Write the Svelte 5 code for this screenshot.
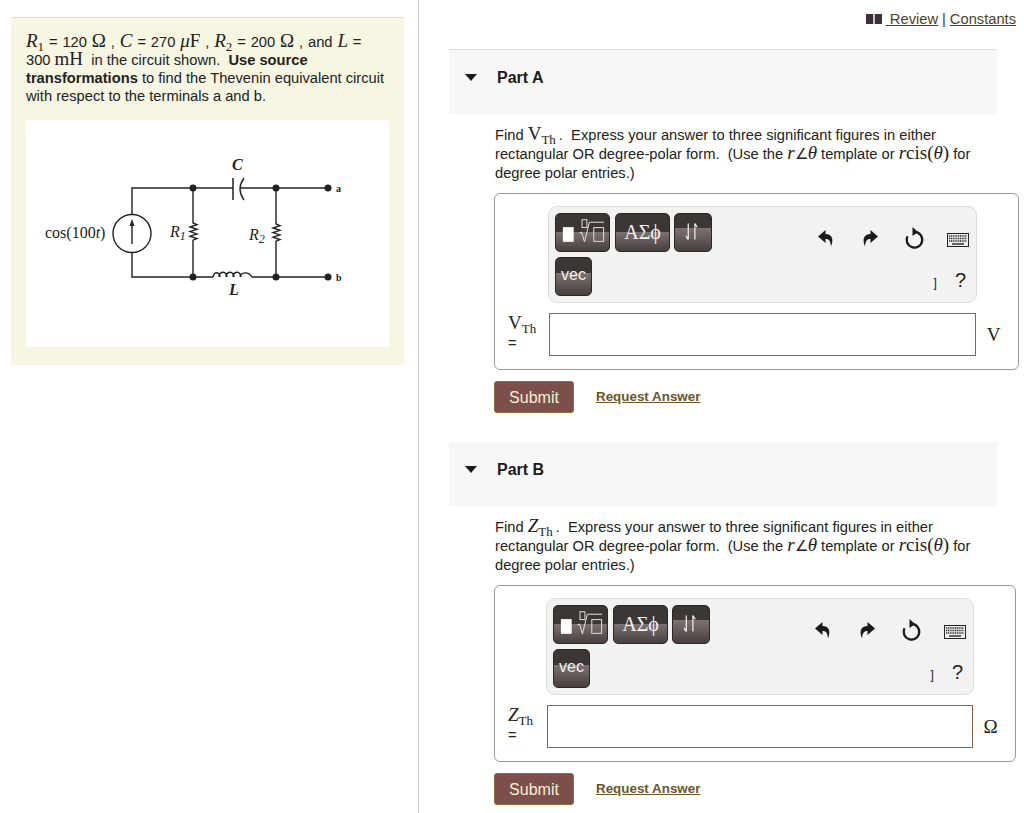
<script>
  const parts = [
    { id: 'A', v: 'V', italic: false, unit: 'V', labelWidth: 41, boxRight: 5 },
    { id: 'B', v: 'Z', italic: true, unit: 'Ω', labelWidth: 39, boxRight: 8 },
  ];
</script>

{#snippet tool(kind)}
  <span class="tool">
    {#if kind === 'undo'}
      <svg viewBox="0 0 18 20" width="18" height="20">
        <path d="M8.500 2 1 8.500 8.500 15v-4c3.200 0 5 1.500 5.500 7.500C17.500 10 14 6 8.500 6z" />
      </svg>
    {:else if kind === 'redo'}
      <svg viewBox="0 0 18 20" width="18" height="20">
        <path d="M9.500 2 17 8.500 9.500 15v-4c-3.200 0-5 1.500-5.500 7.500C.5 10 4 6 9.500 6z" />
      </svg>
    {:else if kind === 'reset'}
      <svg viewBox="0 0 20 24" width="20" height="24">
        <path d="M10.500 6a7.800 7.800 0 1 1-7 4.200" fill="none" stroke="#1b1b1b" stroke-width="2.300" />
        <path d="M8.500 1 14 6l-5.500 4z" />
      </svg>
    {:else}
      <svg class="keyboard" viewBox="0 0 22 14" width="22" height="14">
        <rect x="0.500" y="0.500" width="21" height="13" fill="#eee" stroke="#222" />
        <path d="M2 3h18M2 5.500h18M2 8h18" stroke="#333" stroke-width="1.300" stroke-dasharray="1.200 .6" />
        <path d="M5 11h12" stroke="#333" stroke-width="1.500" />
      </svg>
    {/if}
  </span>
{/snippet}

{#snippet mathName(part)}
  <span class="math big" class:it={part.italic}>{part.v}</span><sub class="math">Th</sub>
{/snippet}

<div class="page">
  <aside class="left">
    <div class="problem">
      <p class="statement">
        <span class="spaced"><span class="math big it">R</span><sub class="math">1</sub> = 120 <span class="math big">Ω</span> , <span class="math big it">C</span> = 270 <span class="math big"><i>μ</i>F</span> , <span class="math big it">R</span><sub class="math">2</sub> = 200 <span class="math big">Ω</span> , and <span class="math big it">L</span> =</span>
        <br />300 <span class="math big">mH</span> &nbsp;in the circuit shown. &nbsp;<b>Use source<br />transformations</b> to find the Thevenin equivalent circuit<br />with respect to the terminals a and b.
      </p>
      <div class="figure">
        <svg viewBox="0 0 363 227" width="363" height="227">
          <g fill="none" stroke="#222" stroke-width="1.400">
            <path d="M106 95V68H207M214 68H302M106 132V157H187M226 157H302" />
            <path d="M167 68V103l4 1.700-7 2.300 7 2.300-7 2.300 7 2.300-7 2.300 7 2.300-4 1.700V157" />
            <path d="M250 68V104l4 1.700-7 2.300 7 2.300-7 2.300 7 2.300-7 2.300 7 2.300-4 1.700V157" />
            <path d="M207 58V80" stroke-width="1.500" />
            <path d="M218 58Q210 69 218 80" />
            <path d="M187 157c1-5 4-5 6-3 1 1.500 1 3 1 3M193 157c0-5 5-6 7-3 1 1.500 1 3 1 3M200 157c0-5 5-6 7-3 1 1.500 1 3 1 3M207 157c0-5 5-6 7-3 1 1.500 1 3 1 3M214 157c1-5 8-6 12 0" />
            <circle cx="106" cy="113.500" r="19" />
            <path d="M106 124V104" />
          </g>
          <path d="M103.500 106 106 99l2.500 7z" fill="#222" />
          <g fill="#222">
            <circle cx="167" cy="68" r="3.500" />
            <circle cx="250" cy="68" r="3.500" />
            <circle cx="302" cy="68" r="3.500" />
            <circle cx="167" cy="157" r="3.500" />
            <circle cx="250" cy="157" r="3.500" />
            <circle cx="302" cy="157" r="3.500" />
          </g>
          <g class="fig-text">
            <text x="19" y="118">cos(100<tspan class="it">t</tspan>)</text>
            <text x="144" y="117" class="it">R<tspan class="sub" dy="3">1</tspan></text>
            <text x="223" y="120" class="it">R<tspan class="sub" dy="3">2</tspan></text>
            <text x="206" y="50" class="it bold">C</text>
            <text x="203" y="175" class="it bold">L</text>
            <text x="310" y="72" class="small">a</text>
            <text x="310" y="161" class="small">b</text>
          </g>
        </svg>
      </div>
    </div>
  </aside>

  <main class="right">
    <nav class="top-links">
      <svg viewBox="0 0 16 10" width="16" height="10">
        <path d="M0 0h7.300v10H0zM8.700 0H16v10H8.700z" fill="#3b2f3a" />
      </svg>
      <a href="#review" class="review">&nbsp;Review</a>
      <span class="sep">|</span>
      <a href="#constants">Constants</a>
    </nav>

    {#each parts as part}
      <section class="part" class:first={part.id === 'A'}>
        <header class="part-head">
          <span class="caret"></span>
          <h2>Part {part.id}</h2>
        </header>
        <p class="question">
          Find {@render mathName(part)}<span class="after-name">.</span> &nbsp;Express your answer to three significant figures in either<br />
          rectangular OR degree-polar form. &nbsp;(Use the <span class="math big it">r</span><span class="math angle">∠</span><span class="math big it">θ</span> template or <span class="math big"><i>r</i>cis(<i>θ</i>)</span> for<br />
          degree polar entries.)
        </p>
        <div class="answer" style="grid-template-columns: {part.labelWidth}px 1fr 42px; margin-right: {part.boxRight}px">
          <div class="toolbar">
            <div class="row">
              <div class="btns">
                <button class="tbtn templates" aria-label="Templates">
                  <svg viewBox="0 0 54 39" width="54" height="39">
                    <rect x="7" y="14" width="11" height="15" fill="#fff" />
                    <g fill="none" stroke="#e4e0e0" stroke-width="1">
                      <rect x="26.500" y="6.500" width="5" height="8" />
                      <path d="M24 20l2-1 3 10 5-20h15" />
                      <rect x="38.500" y="14.500" width="10" height="14" />
                    </g>
                  </svg>
                </button>
                <button class="tbtn greek">ΑΣϕ</button>
                <button class="tbtn arrows" aria-label="Arrows">
                  <svg viewBox="0 0 38 39" width="36" height="37">
                    <g fill="none" stroke="#f4f0f0" stroke-width="1.300">
                      <path d="M14 10V27M14 27l-2.500-4" />
                      <path d="M21 27V10M21 10l2.500 4" />
                    </g>
                  </svg>
                </button>
              </div>
              <div class="tools">
                {@render tool('undo')}
                {@render tool('redo')}
                {@render tool('reset')}
                {@render tool('keyboard')}
              </div>
            </div>
            <div class="row row2">
              <button class="tbtn vec">vec</button>
              <div class="help">
                <span class="bracket">]</span>
                <span class="qmark">?</span>
              </div>
            </div>
          </div>
          <label class="var" for="answer-{part.id}">
            <span>{@render mathName(part)}</span>
            <span class="eq">=</span>
          </label>
          <input id="answer-{part.id}" type="text" />
          <span class="unit">{part.unit}</span>
        </div>
        <div class="actions">
          <button class="submit">Submit</button>
          <a href="#request" class="request">Request Answer</a>
        </div>
      </section>
    {/each}
  </main>
</div>

<style>
  :global(body) {
    background: #fff;
  }

  .page {
    display: flex;
    height: 813px;
    overflow: hidden;
    font-family: 'Liberation Sans', Arial, sans-serif;
    font-size: 14.7px;
    color: #222;
  }

  .left {
    width: 418px;
    flex-shrink: 0;
    border-right: 1px solid #ccc;
    box-sizing: content-box;
  }

  .problem {
    margin: 17px 0 0 11px;
    width: 393px;
    height: 348px;
    box-sizing: border-box;
    background: #f6f6e2;
    border-top: 1px solid #ddd;
    padding: 15px 15px 0;
  }

  .statement {
    margin: 0;
    height: 72px;
    line-height: 18px;
    white-space: nowrap;
  }

  .spaced {
    word-spacing: 0.8px;
  }

  .figure {
    margin-top: 15px;
    width: 363px;
    height: 227px;
    background: #fff;
  }

  .figure svg {
    display: block;
  }

  .fig-text {
    font-family: 'Liberation Serif', serif;
    font-size: 16px;
    fill: #222;
  }

  .fig-text .it {
    font-style: italic;
  }

  .fig-text .bold {
    font-weight: bold;
  }

  .fig-text .sub {
    font-size: 12px;
  }

  .fig-text .small {
    font-size: 10px;
    font-weight: bold;
  }

  .math {
    font-family: 'Liberation Serif', serif;
  }

  .big {
    font-size: 19px;
    line-height: 0;
  }

  .angle {
    font-size: 15px;
    line-height: 0;
  }

  .after-name {
    margin-left: 3px;
  }

  .it {
    font-style: italic;
  }

  sub {
    font-size: 13px;
    line-height: 0;
  }

  .right {
    flex: 1;
    min-width: 0;
    padding-left: 30px;
  }

  .top-links {
    height: 49px;
    box-sizing: border-box;
    padding: 10px 8px 0 0;
    display: flex;
    justify-content: flex-end;
    align-items: baseline;
    line-height: 18px;
  }

  .top-links svg {
    align-self: flex-start;
    margin: 4px 4px 0 0;
  }

  .top-links a {
    color: #4f4226;
  }

  .sep {
    margin: 0 4px;
    color: #333;
  }

  .part {
    padding-bottom: 29px;
  }

  .part-head {
    margin-right: 27px;
    height: 64px;
    background: #f7f7f7;
    display: flex;
    align-items: center;
    padding-left: 16px;
    padding-bottom: 9px;
    box-sizing: border-box;
  }

  .first .part-head {
    height: 65px;
    border-top: 1px solid #ddd;
  }

  .caret {
    width: 0;
    height: 0;
    border-left: 6.500px solid transparent;
    border-right: 6.500px solid transparent;
    border-top: 7px solid #1b1b1b;
    margin-right: 20px;
  }

  h2 {
    margin: 0;
    font-size: 16px;
    font-weight: bold;
    color: #1b1b1b;
  }

  .question {
    margin: 12px 0 10px 46px;
    line-height: 19px;
    height: 57px;
    white-space: nowrap;
  }

  .answer {
    margin: 0 5px 0 45px;
    height: 177px;
    box-sizing: border-box;
    border: 1px solid #999;
    border-radius: 6px;
    padding: 12px 0 13px 13px;
    display: grid;
    grid-template-rows: 97px 43px;
    row-gap: 10px;
  }

  .toolbar {
    grid-column: 2;
    margin: 0 -1px;
    background: #f2f2f2;
    border: 1px solid #ddd;
    border-radius: 9px;
    padding: 6px 0 6px 6px;
    display: flex;
    flex-direction: column;
    gap: 5px;
  }

  .row {
    display: flex;
    justify-content: space-between;
  }

  .btns {
    display: flex;
    gap: 5px;
  }

  .tbtn {
    height: 39px;
    padding: 0;
    border: 1px solid #2b2727;
    border-radius: 5px;
    background: linear-gradient(#3c3737 0 48%, #7d7272 48%, #453f3f 100%);
    color: #f4f0f0;
    display: flex;
    align-items: center;
    justify-content: center;
    overflow: hidden;
  }

  .templates {
    width: 55px;
  }

  .greek {
    width: 55px;
    font-family: 'Liberation Serif', serif;
    font-size: 20px;
  }

  .arrows {
    width: 38px;
    margin-left: -1px;
    background: linear-gradient(#3c3737 0 38%, #7d7272 38%, #453f3f 100%);
  }

  .vec {
    width: 37px;
    font-family: 'Liberation Sans', sans-serif;
    font-size: 16px;
    padding-bottom: 4px;
    background: linear-gradient(#3c3737 0 41%, #7d7272 41%, #453f3f 100%);
  }

  .tools {
    display: flex;
    align-items: center;
    gap: 22px;
    padding: 11px 7px 0 0;
  }

  .tool {
    width: 22px;
    display: flex;
    justify-content: center;
    fill: #1b1b1b;
  }

  .keyboard {
    margin-top: 3px;
  }

  .help {
    display: flex;
    align-items: center;
    gap: 18px;
    padding: 8px 10px 0 0;
  }

  .bracket {
    font-size: 12px;
    padding-top: 4px;
  }

  .qmark {
    font-size: 20px;
  }

  .var {
    grid-column: 1;
    grid-row: 2;
    display: flex;
    flex-direction: column;
    line-height: 19px;
    padding-top: 2px;
    white-space: nowrap;
  }

  input {
    grid-column: 2;
    grid-row: 2;
    box-sizing: border-box;
    width: 100%;
    height: 43px;
    border: 1px solid #86654c;
    background: #fff;
    outline: none;
    padding: 0;
  }

  .unit {
    grid-column: 3;
    grid-row: 2;
    font-family: 'Liberation Serif', serif;
    font-size: 19px;
    display: flex;
    align-items: center;
    justify-content: center;
    padding-right: 7px;
  }

  .actions {
    margin: 11px 0 0 45px;
    display: flex;
    align-items: center;
    gap: 22px;
  }

  .submit {
    width: 80px;
    height: 32px;
    border: 1px solid #8f6a3c;
    border-radius: 3px;
    background: #7c4f4a;
    color: #f7edd2;
    font-family: 'Liberation Sans', sans-serif;
    font-size: 16px;
    padding: 1px 0 0;
  }

  .request {
    font-size: 13.400px;
    font-weight: bold;
    color: #6d5326;
    margin-top: -2px;
  }
</style>
